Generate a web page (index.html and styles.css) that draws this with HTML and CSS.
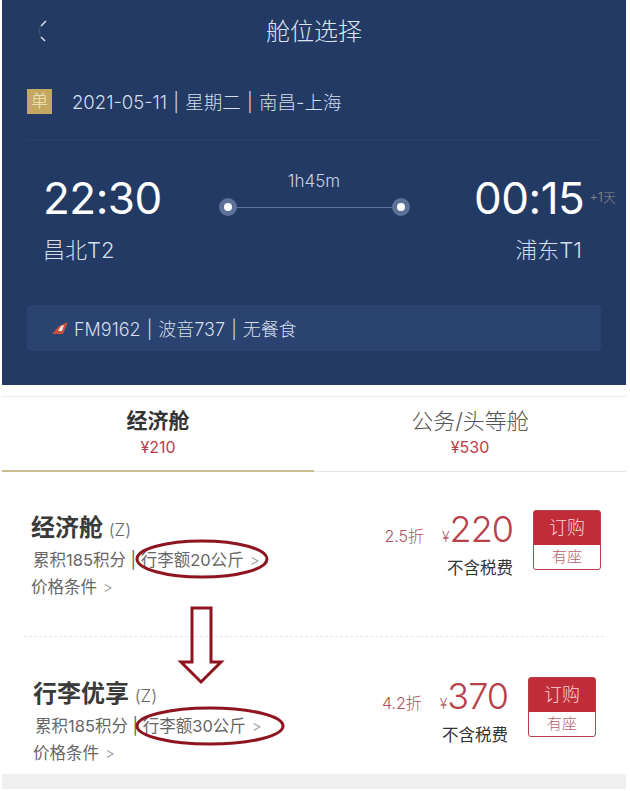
FILE: index.html
```html
<!DOCTYPE html>
<html lang="zh-CN">
<head>
  <meta charset="UTF-8">
  <meta name="viewport" content="width=device-width, initial-scale=1.0">
  <title>舱位选择</title>
  <link rel="stylesheet" href="styles.css">
</head>
<body>
  <div class="page">
    <div class="flight">
      <div class="topbar">
        <svg class="back" width="14" height="30" viewBox="0 0 14 30"><path d="M10 5 L5 10" fill="none" stroke="#dfe5ee" stroke-width="1.5"/><path d="M5 10 L3 14 L4 19" fill="none" stroke="#3b5078" stroke-width="1.5"/><path d="M5 21 L9 25" fill="none" stroke="#dfe5ee" stroke-width="1.5"/></svg>
        <span class="title">舱位选择</span>
      </div>
      <div class="date-row">
        <span class="badge">单</span>
        <span>2021-05-11 | 星期二 | 南昌-上海</span>
      </div>
      <div class="times">
        <div class="dep">
          <div class="clock">22:30</div>
          <div class="airport">昌北T2</div>
        </div>
        <div class="route">
          <div class="duration">1h45m</div>
          <div class="line"><i class="dot"></i><i class="bar"></i><i class="dot"></i></div>
        </div>
        <div class="arr">
          <div class="clock">00:15<span class="plus">+1天</span></div>
          <div class="airport">浦东T1</div>
        </div>
      </div>
      <div class="info">
        <svg width="18" height="14" viewBox="0 0 18 14"><path d="M1 13 L8 5 L17 1 L12 13 Z" fill="#c8503f"/><path d="M7 10 L10 5 L13 4 L11 10 Z" fill="#f0e6e0"/></svg>
        <span>FM9162 | 波音737 | 无餐食</span>
      </div>
    </div>

    <div class="tabs">
      <div class="tab active">
        <div class="tab-name">经济舱</div>
        <div class="tab-price">¥210</div>
      </div>
      <div class="tab">
        <div class="tab-name">公务/头等舱</div>
        <div class="tab-price">¥530</div>
      </div>
    </div>

    <div class="fares">
      <div class="fare first">
        <div class="fare-left">
          <div class="fare-name">经济舱 <span class="code">(Z)</span></div>
          <div class="fare-sub">累积185积分 | 行李额20公斤<span class="more">&gt;</span></div>
          <div class="fare-sub">价格条件<span class="more">&gt;</span></div>
        </div>
        <div class="fare-right">
          <div class="fare-price">
            <div class="price-line"><span class="discount">2.5折</span><span class="yen">¥</span><span class="amount">220</span></div>
            <div class="tax">不含税费</div>
          </div>
          <div class="book"><div class="book-top">订购</div><div class="book-bottom">有座</div></div>
        </div>
      </div>
      <div class="fare second">
        <div class="fare-left">
          <div class="fare-name">行李优享 <span class="code">(Z)</span></div>
          <div class="fare-sub">累积185积分 | 行李额30公斤<span class="more">&gt;</span></div>
          <div class="fare-sub">价格条件<span class="more">&gt;</span></div>
        </div>
        <div class="fare-right">
          <div class="fare-price">
            <div class="price-line"><span class="discount">4.2折</span><span class="yen">¥</span><span class="amount">370</span></div>
            <div class="tax">不含税费</div>
          </div>
          <div class="book"><div class="book-top">订购</div><div class="book-bottom">有座</div></div>
        </div>
      </div>
    </div>
    <div class="footer-strip"></div>
  </div>

  <!-- red hand-drawn marks on top of the screenshot -->
  <svg class="marks" width="630" height="791" viewBox="0 0 630 791">
    <g fill="none" stroke="#8e1420" stroke-width="3">
      <ellipse cx="202" cy="559" rx="65" ry="18"/>
      <ellipse cx="210" cy="726" rx="73" ry="18"/>
      <path d="M192 608 H211 V662 H221 L201 682 L181 662 H192 Z"/>
    </g>
  </svg>
</body>
</html>
```

FILE: styles.css
```css
body {
  margin: 0;
  background: #fff;
  font-family: Inter, "Noto Sans CJK SC", sans-serif;
  font-weight: 300;
}

.page {
  width: 624px;
  height: 789px;
  margin-left: 2px;
  display: flex;
  flex-direction: column;
}

.flight {
  height: 385px;
  background: #233a65;
  color: #d5deea;
  box-sizing: border-box;
  padding: 0 25px;
}

.topbar {
  height: 62px;
  display: flex;
  align-items: center;
  justify-content: center;
  padding-bottom: 4px;
  box-sizing: border-box;
  position: relative;
}

.back {
  position: absolute;
  left: 9px;
  top: 16px;
}

.title {
  font-size: 24px;
  color: #dfe5ee;
}

.date-row {
  height: 78px;
  box-sizing: border-box;
  display: flex;
  align-items: flex-start;
  gap: 20px;
  padding-top: 27px;
  font-size: 18.5px;
  word-spacing: 1px;
  line-height: 26px;
  border-bottom: 1px dotted #33496f;
}

.badge {
  width: 25px;
  height: 25px;
  background: #c4a85f;
  color: #f1e6c4;
  font-size: 17px;
  line-height: 25px;
  text-align: center;
}

.times {
  height: 165px;
  display: flex;
  justify-content: space-between;
}

.dep {
  width: 170px;
  padding: 32px 0 0 16px;
  box-sizing: border-box;
}

.clock {
  font-size: 44px;
  line-height: 52px;
  font-weight: 400;
  letter-spacing: -0.5px;
  color: #fff;
}

.airport {
  font-size: 22px;
  line-height: 32px;
  margin-top: 10px;
}

.route {
  width: 191px;
  margin-left: 4px;
  text-align: center;
  padding-top: 30px;
  font-size: 17px;
  color: #c8d2e2;
}

.duration {
  line-height: 22px;
  margin-bottom: 6px;
}

.line {
  display: flex;
  align-items: center;
}

.dot {
  width: 8px;
  height: 8px;
  flex: none;
  border-radius: 50%;
  background: #fff;
  border: 5px solid #5d7096;
}

.bar {
  flex: 1;
  height: 1px;
  background: #60739a;
}

.arr {
  width: 174px;
  padding-top: 32px;
  box-sizing: border-box;
  text-align: right;
}

.arr .clock {
  white-space: nowrap;
  margin-right: -15px;
}

.arr .airport {
  margin-right: 19px;
}

.plus {
  font-size: 13px;
  font-weight: 300;
  letter-spacing: 0;
  color: #8f8f85;
  margin-left: 5px;
  vertical-align: 12px;
  line-height: 1;
}

.info {
  height: 46px;
  padding-left: 24px;
  display: flex;
  align-items: center;
  gap: 5px;
  background: #2a4370;
  border-radius: 4px;
  font-size: 18px;
  word-spacing: 1px;
}

.tabs {
  margin-top: 11px;
  height: 76px;
  display: flex;
  border-top: 1px solid #e6ebf2;
  border-bottom: 1px solid #e3e3e3;
  box-sizing: border-box;
}

.tab {
  width: 50%;
  box-sizing: border-box;
  text-align: center;
  padding-top: 9px;
}

.tab.active {
  border-bottom: 2px solid #c9bd8f;
  margin-bottom: -1px;
}

.tab-name {
  font-size: 22px;
  line-height: 30px;
  color: #555;
}

.active .tab-name {
  font-size: 21px;
  font-weight: bold;
  color: #333;
}

.tab-price {
  font-size: 16px;
  font-weight: 400;
  line-height: 22px;
  color: #b8404a;
}

.fares {
  flex: 1;
}

.fare {
  display: flex;
  justify-content: space-between;
}

.first {
  height: 165px;
  box-sizing: border-box;
  padding: 38px 25px 0 29px;
  position: relative;
}

/* dashed divider between the two fares */
.first::after {
  content: "";
  position: absolute;
  left: 22px;
  right: 22px;
  bottom: 0;
  border-bottom: 1px dashed #e6e6e6;
}

.second {
  padding: 40px 30px 0 31px;
}

.first .fare-left {
  padding-top: 3px;
}

.second .fare-left {
  padding-top: 2px;
}

.fare-name {
  font-size: 24px;
  line-height: 30px;
  margin-bottom: 2px;
  font-weight: bold;
  color: #3a3a3a;
}

.code {
  font-size: 17px;
  font-weight: 300;
  color: #666;
}

.fare-sub {
  font-size: 16.5px;
  line-height: 27px;
  font-weight: 400;
  color: #666;
  padding-left: 2px;
}

.fare-sub:last-child {
  padding-left: 0;
}

.more {
  font-size: 15px;
  font-weight: 300;
  color: #999;
  margin-left: 6px;
}

.fare-right {
  display: flex;
  gap: 20px;
}

.fare-price {
  text-align: right;
}

.price-line {
  display: flex;
  align-items: baseline;
  justify-content: flex-end;
  line-height: 38px;
  color: #b8404a;
}

.discount {
  font-size: 16px;
  color: #b04f5a;
  margin-right: 18px;
}

.yen {
  font-size: 14px;
  color: #b5606a;
}

.amount {
  font-size: 36px;
  letter-spacing: -1px;
}

.tax {
  font-size: 16.5px;
  font-weight: 400;
  line-height: 24px;
  margin-top: 0;
  color: #333;
}

.book {
  width: 68px;
  height: 60px;
  box-sizing: border-box;
  border: 1.5px solid #b5404b;
  border-radius: 3px;
  text-align: center;
}

.book-top {
  height: 34px;
  background: #c02d38;
  color: #f6d6d6;
  font-size: 18px;
  line-height: 33px;
}

.book-bottom {
  font-size: 15px;
  line-height: 23px;
  color: #b8606a;
}

.footer-strip {
  height: 15px;
  background: #efefef;
  flex: none;
}

.marks {
  position: absolute;
  left: 0;
  top: 0;
  pointer-events: none;
}
```
